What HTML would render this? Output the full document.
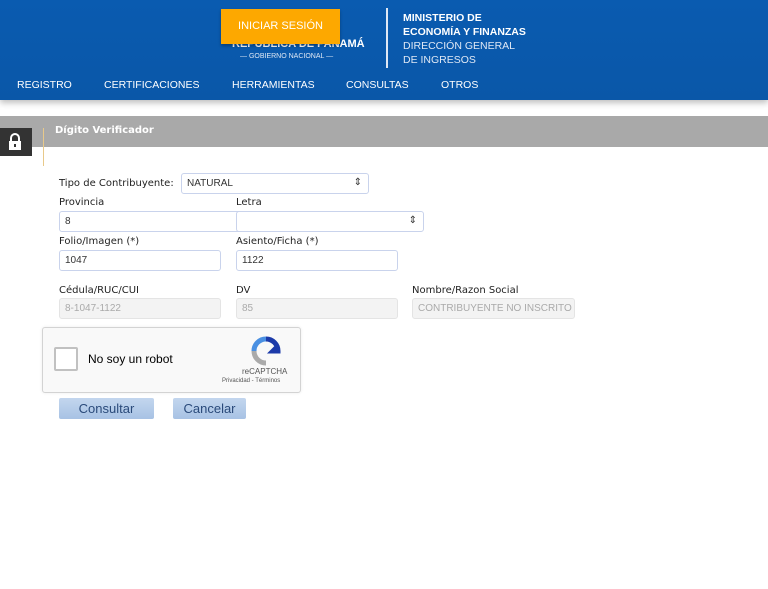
<!DOCTYPE html>
<html><head><meta charset="utf-8"><style>
*{margin:0;padding:0;box-sizing:border-box}
body{width:768px;height:589px;background:#fff;font-family:"Liberation Sans",sans-serif;position:relative;overflow:hidden}
.hdr{position:absolute;left:0;top:0;width:768px;height:100px;background:linear-gradient(#0a5bb0,#0a57a8);box-shadow:0 3px 6px rgba(0,0,0,.25)}
.a{position:absolute;white-space:nowrap}
.nav{color:#fff;font-size:10.5px;top:79px}
.lbl{font-family:"DejaVu Sans",sans-serif;font-size:10px;color:#222}
.inp{position:absolute;height:21px;border:1px solid #c9d3ec;border-radius:3px;font-size:10px;color:#333;padding:4px 5px;background:#fff}
.dis{background:#f3f3f3;border-color:#e4e4e4;color:#aaa}
.btn{position:absolute;top:398px;height:21px;background:linear-gradient(#c3d6ee,#a7c2e4);border-radius:2px;color:#2a4a7a;font-size:13px;text-align:center;line-height:21px}
</style></head><body>
<div class="hdr">
<div class="a" style="left:232px;top:38px;color:#fff;font-weight:bold;font-size:11px">REPÚBLICA DE PANAMÁ</div>
<div class="a" style="left:240px;top:53px;color:#dfe8f5;font-size:7px">— GOBIERNO NACIONAL —</div>
<div class="a" style="left:221px;top:9px;width:119px;height:35px;background:#fda800;box-shadow:0 2px 3px rgba(0,0,0,.3);color:#fff;font-size:11px;text-align:center;line-height:34px">INICIAR SESIÓN</div>
<div class="a" style="left:386px;top:8px;width:2px;height:60px;background:#dfe8f5"></div>
<div class="a" style="left:403px;top:11px;color:#fff;font-weight:bold;font-size:10.5px;line-height:14px">MINISTERIO DE<br>ECONOMÍA Y FINANZAS</div>
<div class="a" style="left:403px;top:39px;color:#dfe8f5;font-size:10.5px;line-height:14px">DIRECCIÓN GENERAL<br>DE INGRESOS</div>
<div class="a nav" style="left:17px">REGISTRO</div>
<div class="a nav" style="left:104px">CERTIFICACIONES</div>
<div class="a nav" style="left:232px">HERRAMIENTAS</div>
<div class="a nav" style="left:346px">CONSULTAS</div>
<div class="a nav" style="left:441px">OTROS</div>
</div>
<div class="a" style="left:0;top:116px;width:768px;height:31px;background:#a9a9a9"></div>
<div class="a" style="left:55px;top:125px;color:#fff;font-weight:bold;font-size:10px;font-family:'DejaVu Sans',sans-serif">Dígito Verificador</div>
<div class="a" style="left:43px;top:128px;width:1px;height:38px;background:#e8c98a"></div>
<div class="a" style="left:0;top:128px;width:32px;height:28px;background:#333"></div>
<svg class="a" style="left:7px;top:133px" width="16" height="18" viewBox="0 0 16 18"><path d="M4 8V5a4 4 0 0 1 8 0v3" stroke="#fff" stroke-width="2" fill="none"/><rect x="2" y="8" width="12" height="9" fill="#fff"/><rect x="7" y="11" width="2" height="3" fill="#333"/></svg>
<div class="a lbl" style="left:59px;top:178px">Tipo de Contribuyente:</div>
<div class="inp" style="left:181px;top:173px;width:188px">NATURAL<span style="position:absolute;right:6px;top:3px">⇕</span></div>
<div class="a lbl" style="left:59px;top:197px">Provincia</div>
<div class="a lbl" style="left:236px;top:197px">Letra</div>
<div class="inp" style="left:59px;top:211px;width:185px">8</div>
<div class="inp" style="left:236px;top:211px;width:188px"><span style="position:absolute;right:6px;top:3px">⇕</span></div>
<div class="a lbl" style="left:59px;top:236px">Folio/Imagen (*)</div>
<div class="a lbl" style="left:236px;top:236px">Asiento/Ficha (*)</div>
<div class="inp" style="left:59px;top:250px;width:162px">1047</div>
<div class="inp" style="left:236px;top:250px;width:162px">1122</div>
<div class="a lbl" style="left:59px;top:285px">Cédula/RUC/CUI</div>
<div class="a lbl" style="left:236px;top:285px">DV</div>
<div class="a lbl" style="left:412px;top:285px">Nombre/Razon Social</div>
<div class="inp dis" style="left:59px;top:298px;width:162px">8-1047-1122</div>
<div class="inp dis" style="left:236px;top:298px;width:162px">85</div>
<div class="inp dis" style="left:412px;top:298px;width:163px;overflow:hidden;white-space:nowrap">CONTRIBUYENTE NO INSCRITO</div>
<div class="a" style="left:42px;top:327px;width:259px;height:66px;background:#f9f9f9;border:1px solid #d3d3d3;border-radius:3px;box-shadow:0 0 3px rgba(0,0,0,.08)"></div>
<div class="a" style="left:54px;top:347px;width:24px;height:24px;background:#fff;border:2px solid #c1c1c1;border-radius:2px"></div>
<div class="a" style="left:88px;top:352px;font-size:12px;color:#000">No soy un robot</div>
<svg class="a" style="left:251px;top:336px" width="30" height="30" viewBox="0 0 30 30"><path d="M15 3a12 12 0 0 1 12 12h-5l3-3" fill="none" stroke="#1c3aa9" stroke-width="5"/><path d="M3 15A12 12 0 0 1 15 3" fill="none" stroke="#4a90e2" stroke-width="5"/><path d="M15 27A12 12 0 0 1 3 15" fill="none" stroke="#aaa" stroke-width="5"/></svg>
<div class="a" style="left:242px;top:367px;font-size:8px;color:#555">reCAPTCHA</div>
<div class="a" style="left:222px;top:378px;font-size:6px;color:#555">Privacidad - Términos</div>
<div class="btn" style="left:59px;width:95px">Consultar</div>
<div class="btn" style="left:173px;width:73px">Cancelar</div>
</body></html>
